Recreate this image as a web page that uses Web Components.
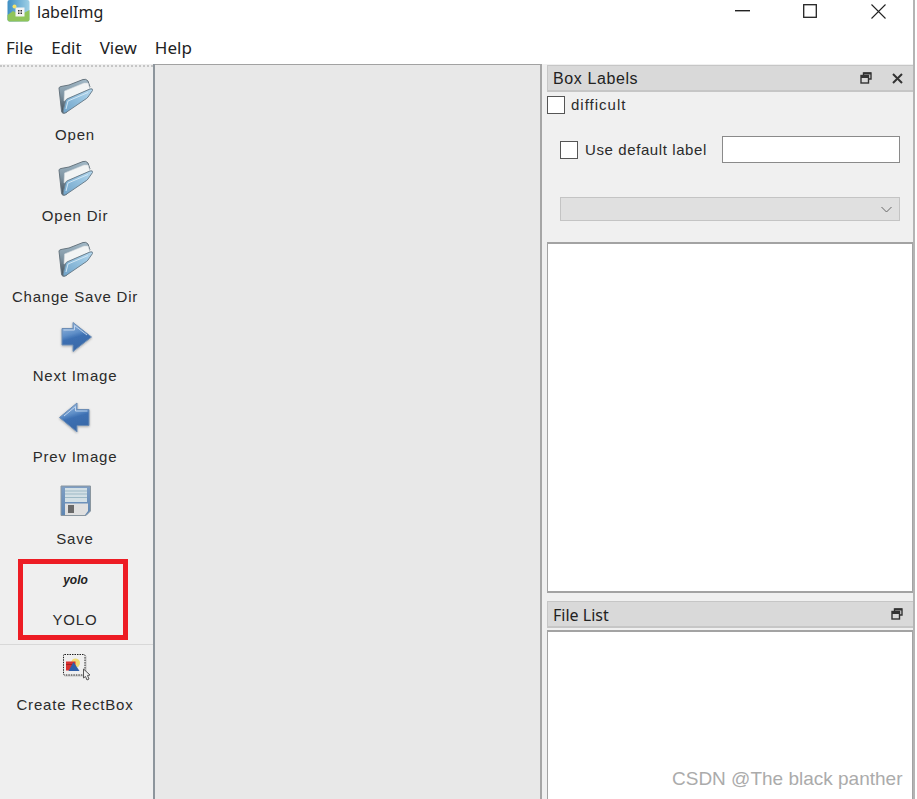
<!DOCTYPE html>
<html>
<head>
<meta charset="utf-8">
<title>labelImg</title>
<style>
  html, body { margin: 0; padding: 0; background: #fff; }
  body { width: 917px; height: 799px; overflow: hidden; font-family: "Noto Sans", sans-serif; color: #222; }
</style>
</head>
<body>
<label-app>
  <tool-bar slot="tools">
    <tool-button label="Open" style="--h:82px;--gap:11px"><tool-icon name="folder"></tool-icon></tool-button>
    <tool-button label="Open Dir" style="--h:81px"><tool-icon name="folder"></tool-icon></tool-button>
    <tool-button label="Change Save Dir" style="--h:79px"><tool-icon name="folder"></tool-icon></tool-button>
    <tool-button label="Next Image" style="--h:81px"><tool-icon name="next"></tool-icon></tool-button>
    <tool-button label="Prev Image" style="--h:82px"><tool-icon name="prev"></tool-icon></tool-button>
    <tool-button label="Save" style="--h:76px"><tool-icon name="save"></tool-icon></tool-button>
    <tool-button label="YOLO" marked><tool-icon name="yolo"></tool-icon></tool-button>
    <tool-button label="Create RectBox" after-rule><tool-icon name="rect"></tool-icon></tool-button>
  </tool-bar>
  <box-labels slot="docks"></box-labels>
  <dock-panel slot="docks" title="File List" class="files"><list-box style="height:172px;margin-top:2px"></list-box></dock-panel>
</label-app>

<script>
const arrowStops = `<stop offset="0" stop-color="#a3c0e2"/><stop offset=".45" stop-color="#5f8fc8"/><stop offset=".6" stop-color="#3c6fb2"/><stop offset="1" stop-color="#3a6aa8"/>`;
const icons = {
  folder: `<svg width="36" height="36" viewBox="0 0 36 36">
    <defs>
      <linearGradient id="b" x1="0" y1="0" x2="0" y2="1"><stop offset="0" stop-color="#a3bac8"/><stop offset=".5" stop-color="#7b909e"/><stop offset="1" stop-color="#3d4852"/></linearGradient>
      <linearGradient id="f" x1="0" y1="1" x2="1" y2="0"><stop offset="0" stop-color="#6fa2c8"/><stop offset=".6" stop-color="#96c3e0"/><stop offset="1" stop-color="#b6d8ee"/></linearGradient>
    </defs>
    <path d="M2 10 Q2 9 4 8.500 L12 7 L26 1.500 Q29 .5 31 3 L33 9 L10 34 Q5 37 4.500 33 Z" fill="url(#b)" stroke="#66747e" stroke-width="1"/>
    <path d="M7 23 L7.500 13 L27 5 L31 5 L33 11 Z" fill="#f2f4f4" stroke="#d0d7dc" stroke-width=".6"/>
    <path d="M6 33 L8.500 23 Q9 21 11 20.500 L33 11 Q36 10 35.500 12.500 L31 19 Q30 20.500 28 21.500 L9 34.500 Q6 36 6 33 Z" fill="url(#f)" stroke="#6b7f8d" stroke-width="1"/>
    <path d="M9 31 L11 23 L31 14.500" fill="none" stroke="#d2e7f4" stroke-width="1"/>
  </svg>`,
  next: `<svg width="36" height="36" viewBox="0 0 36 36">
    <defs>
      <linearGradient id="a" x1="0" y1="0" x2=".3" y2="1">${arrowStops}</linearGradient>
      <filter id="d" x="-20%" y="-20%" width="140%" height="140%"><feDropShadow dx="0" dy=".8" stdDeviation=".8" flood-color="#000" flood-opacity=".3"/></filter>
    </defs>
    <path d="M5 8.500 H16 V2.500 L34.500 17 L16 31.500 V25 H5 Z" fill="url(#a)" stroke="#6c8db5" stroke-width="1" filter="url(#d)"/>
    <path d="M6.500 10 H17.500 V5.500 L30 15" fill="none" stroke="#c0d4ec" stroke-width="1"/>
  </svg>`,
  prev: `<svg width="36" height="36" viewBox="0 0 36 36">
    <defs>
      <linearGradient id="a" x1="0" y1="0" x2=".3" y2="1">${arrowStops}</linearGradient>
      <filter id="d" x="-20%" y="-20%" width="140%" height="140%"><feDropShadow dx="0" dy=".8" stdDeviation=".8" flood-color="#000" flood-opacity=".3"/></filter>
    </defs>
    <path d="M32 8.500 H20 V2 L2.500 16.500 L20 31 V24.500 H32 Z" fill="url(#a)" stroke="#6c8db5" stroke-width="1" filter="url(#d)"/>
    <path d="M30.500 10 H18.500 V5.500 L7 15" fill="none" stroke="#c0d4ec" stroke-width="1"/>
  </svg>`,
  save: `<svg width="36" height="36" viewBox="0 0 36 36">
    <defs><linearGradient id="m" x1="0" y1="0" x2="0" y2="1"><stop offset="0" stop-color="#7f9fc4"/><stop offset="1" stop-color="#5e86b3"/></linearGradient></defs>
    <path d="M4 3 H33.500 V28 L29 32.500 H4 Z" fill="url(#m)" stroke="#8a969f" stroke-width="1"/>
    <rect x="8" y="5" width="22" height="14" fill="#d3e0e6"/>
    <path d="M8 8 H30 M8 11 H30 M8 14.500 H30" stroke="#9db9c6" stroke-width="1"/>
    <path d="M8 20.500 H31 V28 L28 32 H8 Z" fill="#e0e0e0"/>
    <rect x="11" y="22" width="6" height="8" fill="#6a6a6a"/>
  </svg>`,
  rect: `<svg width="36" height="36" viewBox="0 0 36 36">
    <path d="M7.500 27 H29 V7" fill="none" stroke="#c4c4c4" stroke-width="1"/>
    <rect x="6.500" y="5.500" width="21.500" height="20.500" rx="1" fill="#efefef" stroke="#222" stroke-width="1" stroke-dasharray="1.500 1"/>
    <circle cx="18.500" cy="14" r="4.500" fill="#f0dc72"/>
    <rect x="9" y="12.500" width="9.500" height="9" fill="#d8302f"/>
    <path d="M9 15.500 H15" stroke="#a52424" stroke-width="1"/>
    <path d="M16.500 13 L22.500 22 H11.500 Z" fill="#2f5fa8"/>
    <path d="M26.500 20 L26.500 29 L28.500 27.500 L30 31 L32 30 L30.500 26.500 L33 26 Z" fill="#eee" stroke="#555" stroke-width="1" stroke-linejoin="round"/>
  </svg>`,
  logo: `<svg width="23" height="22" viewBox="0 0 23 22">
    <defs><linearGradient id="s" x1="0" y1="0" x2="1" y2="0"><stop offset="0" stop-color="#3f8fc4"/><stop offset="1" stop-color="#9fd0e6"/></linearGradient></defs>
    <rect x="0.500" y="0" width="22" height="21.500" rx="2" fill="url(#s)"/>
    <path d="M0.500 15 L6 11 L13 15 L22.500 10 V19.500 Q22.500 21.500 20.500 21.500 H2.500 Q.5 21.500 .5 19.500 Z" fill="#8fc45a"/>
    <rect x="8.500" y="7.500" width="9" height="9" fill="#f4f4f4"/>
    <path d="M11 10 H15 V14 H11 Z" fill="#333"/>
    <path d="M13 9 V15 M10 12 H16" stroke="#f4f4f4" stroke-width="1"/>
    <circle cx="7.500" cy="6.500" r="2" fill="#f5e26b"/>
  </svg>`,
  restore: `<svg width="12" height="12" viewBox="0 0 12 12" fill="none" stroke="#333" stroke-width="1.400">
    <path d="M3.500 3 V1 H11 V7 H8.500"/><rect x="1" y="3.500" width="7.500" height="7.500"/><path d="M1 5 H8.500" stroke-width="2"/><path d="M3.500 1.500 H11" stroke-width="2"/>
  </svg>`,
  close: `<svg width="11" height="11" viewBox="0 0 11 11" fill="none" stroke="#333" stroke-width="2"><path d="M1 1 L10 10 M10 1 L1 10"/></svg>`,
  chevron: `<svg width="11" height="7" viewBox="0 0 11 7" fill="none" stroke="#666" stroke-width="1"><path d="M.5 1 L5.500 6 L10.500 1"/></svg>`,
  min: `<svg width="15" height="2" viewBox="0 0 15 2"><rect width="15" height="1.400" fill="#222"/></svg>`,
  max: `<svg width="14" height="14" viewBox="0 0 14 14" fill="none" stroke="#222" stroke-width="1.300"><rect x=".7" y=".7" width="12.600" height="12.600"/></svg>`,
  cross: `<svg width="15" height="15" viewBox="0 0 15 15" fill="none" stroke="#222" stroke-width="1.100"><path d="M.5 .5 L14.500 14.500 M14.500 .5 L.5 14.500"/></svg>`,
};
const softIcons = ['folder', 'next', 'prev', 'save', 'rect', 'logo'];

class ToolIcon extends HTMLElement {
  constructor() {
    super();
    this.attachShadow({ mode: 'open' });
  }

  connectedCallback() {
    const name = this.getAttribute('name');
    if (name === 'yolo') {
      this.shadowRoot.innerHTML = `<style>:host{display:block;font:italic bold 12px/16px "Liberation Sans",sans-serif;letter-spacing:0;color:#222;padding-left:1px;}</style>yolo`;
    } else {
      const blur = softIcons.includes(name) ? 'filter:blur(.4px);' : '';
      this.shadowRoot.innerHTML = `<style>:host{display:inline-flex;align-items:center;justify-content:center;}svg{display:block;${blur}}</style>${icons[name]}`;
    }
  }
}

const appTemplate = document.createElement('template');
appTemplate.innerHTML = `
  <style>
    :host { display: flex; flex-direction: column; width: 915px; height: 799px; box-sizing: border-box; border-right: 2px solid #b4b4b4; }
    .title { height: 32px; display: flex; align-items: center; flex: none; padding-left: 7px; background: #fff; }
    .title .name { font-size: 16px; margin-left: 7px; margin-top: -9px; }
    .title tool-icon { margin-top: -11px; }
    .controls { margin-left: auto; display: flex; align-items: center; margin-top: -10px; margin-right: 1px; }
    .controls tool-icon { width: 68px; margin: 0; }
    .menu { height: 32px; flex: none; display: flex; gap: 18px; align-items: center; padding-left: 6px; font-size: 17px; box-sizing: border-box; padding-bottom: 1px; }
    .main { flex: 1; display: flex; min-height: 0; background: #f0f0f0; }
    .canvas { width: 387px; flex: none; box-sizing: border-box; background: #e8e8e8; border-top: 1px solid #a2a2a2; border-right: 2px solid #a6a6a6; }
    .side { flex: 1; display: flex; flex-direction: column; padding: 1px 0 0 5px; min-width: 0; }
  </style>
  <div class="title"><tool-icon name="logo"></tool-icon><span class="name">labelImg</span>
    <div class="controls"><tool-icon name="min"></tool-icon><tool-icon name="max"></tool-icon><tool-icon name="cross"></tool-icon></div>
  </div>
  <div class="menu"><span>File</span><span>Edit</span><span>View</span><span>Help</span></div>
  <div class="main">
    <slot name="tools"></slot>
    <div class="canvas"></div>
    <div class="side"><slot name="docks"></slot></div>
  </div>
`;
class LabelApp extends HTMLElement {
  constructor() {
    super();
    this.attachShadow({ mode: 'open' }).appendChild(appTemplate.content.cloneNode(true));
  }
}

const toolBarTemplate = document.createElement('template');
toolBarTemplate.innerHTML = `
  <style>
    :host { display: flex; flex-direction: column; flex: none; width: 155px; box-sizing: border-box; background: #efefef; border-right: 2px solid #8d959c; padding-top: 14px; position: relative; }
    .dots { position: absolute; left: 0; right: 0; top: 1px; border-top: 2px dotted #c6c6c6; }
  </style>
  <div class="dots"></div>
  <slot></slot>
`;
class ToolBar extends HTMLElement {
  constructor() {
    super();
    this.attachShadow({ mode: 'open' }).appendChild(toolBarTemplate.content.cloneNode(true));
  }
}

const buttonTemplate = document.createElement('template');
buttonTemplate.innerHTML = `
  <style>
    :host { display: flex; flex-direction: column; align-items: center; height: var(--h, 81px); box-sizing: border-box; padding-right: 3px; font: 15px/20px "Liberation Sans", sans-serif; letter-spacing: .8px; color: #2b2b2b; flex: none; }
    :host([marked]) { align-self: flex-start; width: 110px; height: 81px; margin-left: 18px; padding: 8px 0 0 4px; border: 5px solid #ed1c24; }
    :host([after-rule]) { height: auto; margin-top: 4px; padding-top: 4px; border-top: 1px solid #d8d8d8; }
    .icon { height: 36px; display: flex; align-items: center; justify-content: center; }
    :host([marked]) .icon { height: 16px; margin-bottom: 22px; }
    .label { margin-top: var(--gap, 10px); white-space: nowrap; }
    :host([marked]) .label { margin-top: 0; }
    :host([after-rule]) .label { margin-top: 10px; }
  </style>
  <div class="icon"><slot></slot></div>
  <div class="label"></div>
`;
class ToolButton extends HTMLElement {
  constructor() {
    super();
    const shadow = this.attachShadow({ mode: 'open' });
    shadow.appendChild(buttonTemplate.content.cloneNode(true));
    shadow.querySelector('.label').textContent = this.getAttribute('label');
  }
}

const dockTemplate = document.createElement('template');
dockTemplate.innerHTML = `
  <style>
    :host { display: block; flex: none; }
    .head { height: 27px; box-sizing: border-box; display: flex; align-items: center; gap: 20px; padding: 0 10px 0 5px; background: #d9d9d9; border: 1px solid #c6c6c6; border-width: 1px 0 2px 1px; font-size: 16px; color: #222; }
    .head span { margin-right: auto; padding-top: 1px; }
  </style>
  <div class="head"><span></span><tool-icon name="restore"></tool-icon></div>
  <slot></slot>
`;
class DockPanel extends HTMLElement {
  constructor() {
    super();
    const shadow = this.attachShadow({ mode: 'open' });
    shadow.appendChild(dockTemplate.content.cloneNode(true));
    shadow.querySelector('span').textContent = this.getAttribute('title');
    if (this.hasAttribute('closable')) {
      const close = document.createElement('tool-icon');
      close.setAttribute('name', 'close');
      shadow.querySelector('.head').appendChild(close);
    }
  }
}

const listTemplate = document.createElement('template');
listTemplate.innerHTML = `
  <style>:host { display: block; box-sizing: border-box; background: #fff; border: 2px solid #a3a3a3; border-width: 2px 1px 2px 1px; }</style>
`;
class ListBox extends HTMLElement {
  constructor() {
    super();
    this.attachShadow({ mode: 'open' }).appendChild(listTemplate.content.cloneNode(true));
  }
}

const boxLabelsTemplate = document.createElement('template');
boxLabelsTemplate.innerHTML = `
  <style>
    :host { display: block; flex: none; margin-bottom: 8px; font: 15px/20px "Liberation Sans", sans-serif; letter-spacing: .6px; color: #2b2b2b; }
    .check { width: 18px; height: 18px; box-sizing: border-box; border: 1px solid #555; background: #fff; flex: none; }
    .row { display: flex; align-items: center; }
    .difficult { gap: 6px; margin-top: 3px; letter-spacing: 1px; }
    .default { gap: 7px; padding-left: 13px; margin-top: 21px; height: 27px; }
    .default input { margin-left: auto; margin-right: 13px; width: 178px; height: 27px; box-sizing: border-box; border: 1px solid #8a8a8a; background: #fff; padding: 0; outline: 0; }
    .combo { margin: 34px 13px 0 13px; height: 24px; box-sizing: border-box; background: #e0e0e0; border: 1px solid #c4c4c4; justify-content: flex-end; padding-right: 7px; }
    list-box { margin-top: 21px; height: 351px; }
  </style>
  <dock-panel title="Box Labels" closable>
    <div class="row difficult"><div class="check"></div><span>difficult</span></div>
    <div class="row default"><div class="check"></div><span>Use default label</span><input type="text"></div>
    <div class="row combo"><tool-icon name="chevron"></tool-icon></div>
    <list-box></list-box>
  </dock-panel>
`;
class BoxLabels extends HTMLElement {
  constructor() {
    super();
    this.attachShadow({ mode: 'open' }).appendChild(boxLabelsTemplate.content.cloneNode(true));
  }
}

const markTemplate = document.createElement('template');
markTemplate.innerHTML = `
  <style>:host { position: absolute; left: 672px; top: 767px; font: 19px/24px "Liberation Sans", sans-serif; color: #ababab; white-space: nowrap; }</style>
  <slot></slot>
`;
class WaterMark extends HTMLElement {
  constructor() {
    super();
    this.attachShadow({ mode: 'open' }).appendChild(markTemplate.content.cloneNode(true));
  }
}

customElements.define('tool-icon', ToolIcon);
customElements.define('list-box', ListBox);
customElements.define('dock-panel', DockPanel);
customElements.define('box-labels', BoxLabels);
customElements.define('tool-button', ToolButton);
customElements.define('tool-bar', ToolBar);
customElements.define('label-app', LabelApp);
customElements.define('water-mark', WaterMark);

const mark = document.createElement('water-mark');
mark.textContent = 'CSDN @The black panther';
document.body.appendChild(mark);
</script>
</body>
</html>
